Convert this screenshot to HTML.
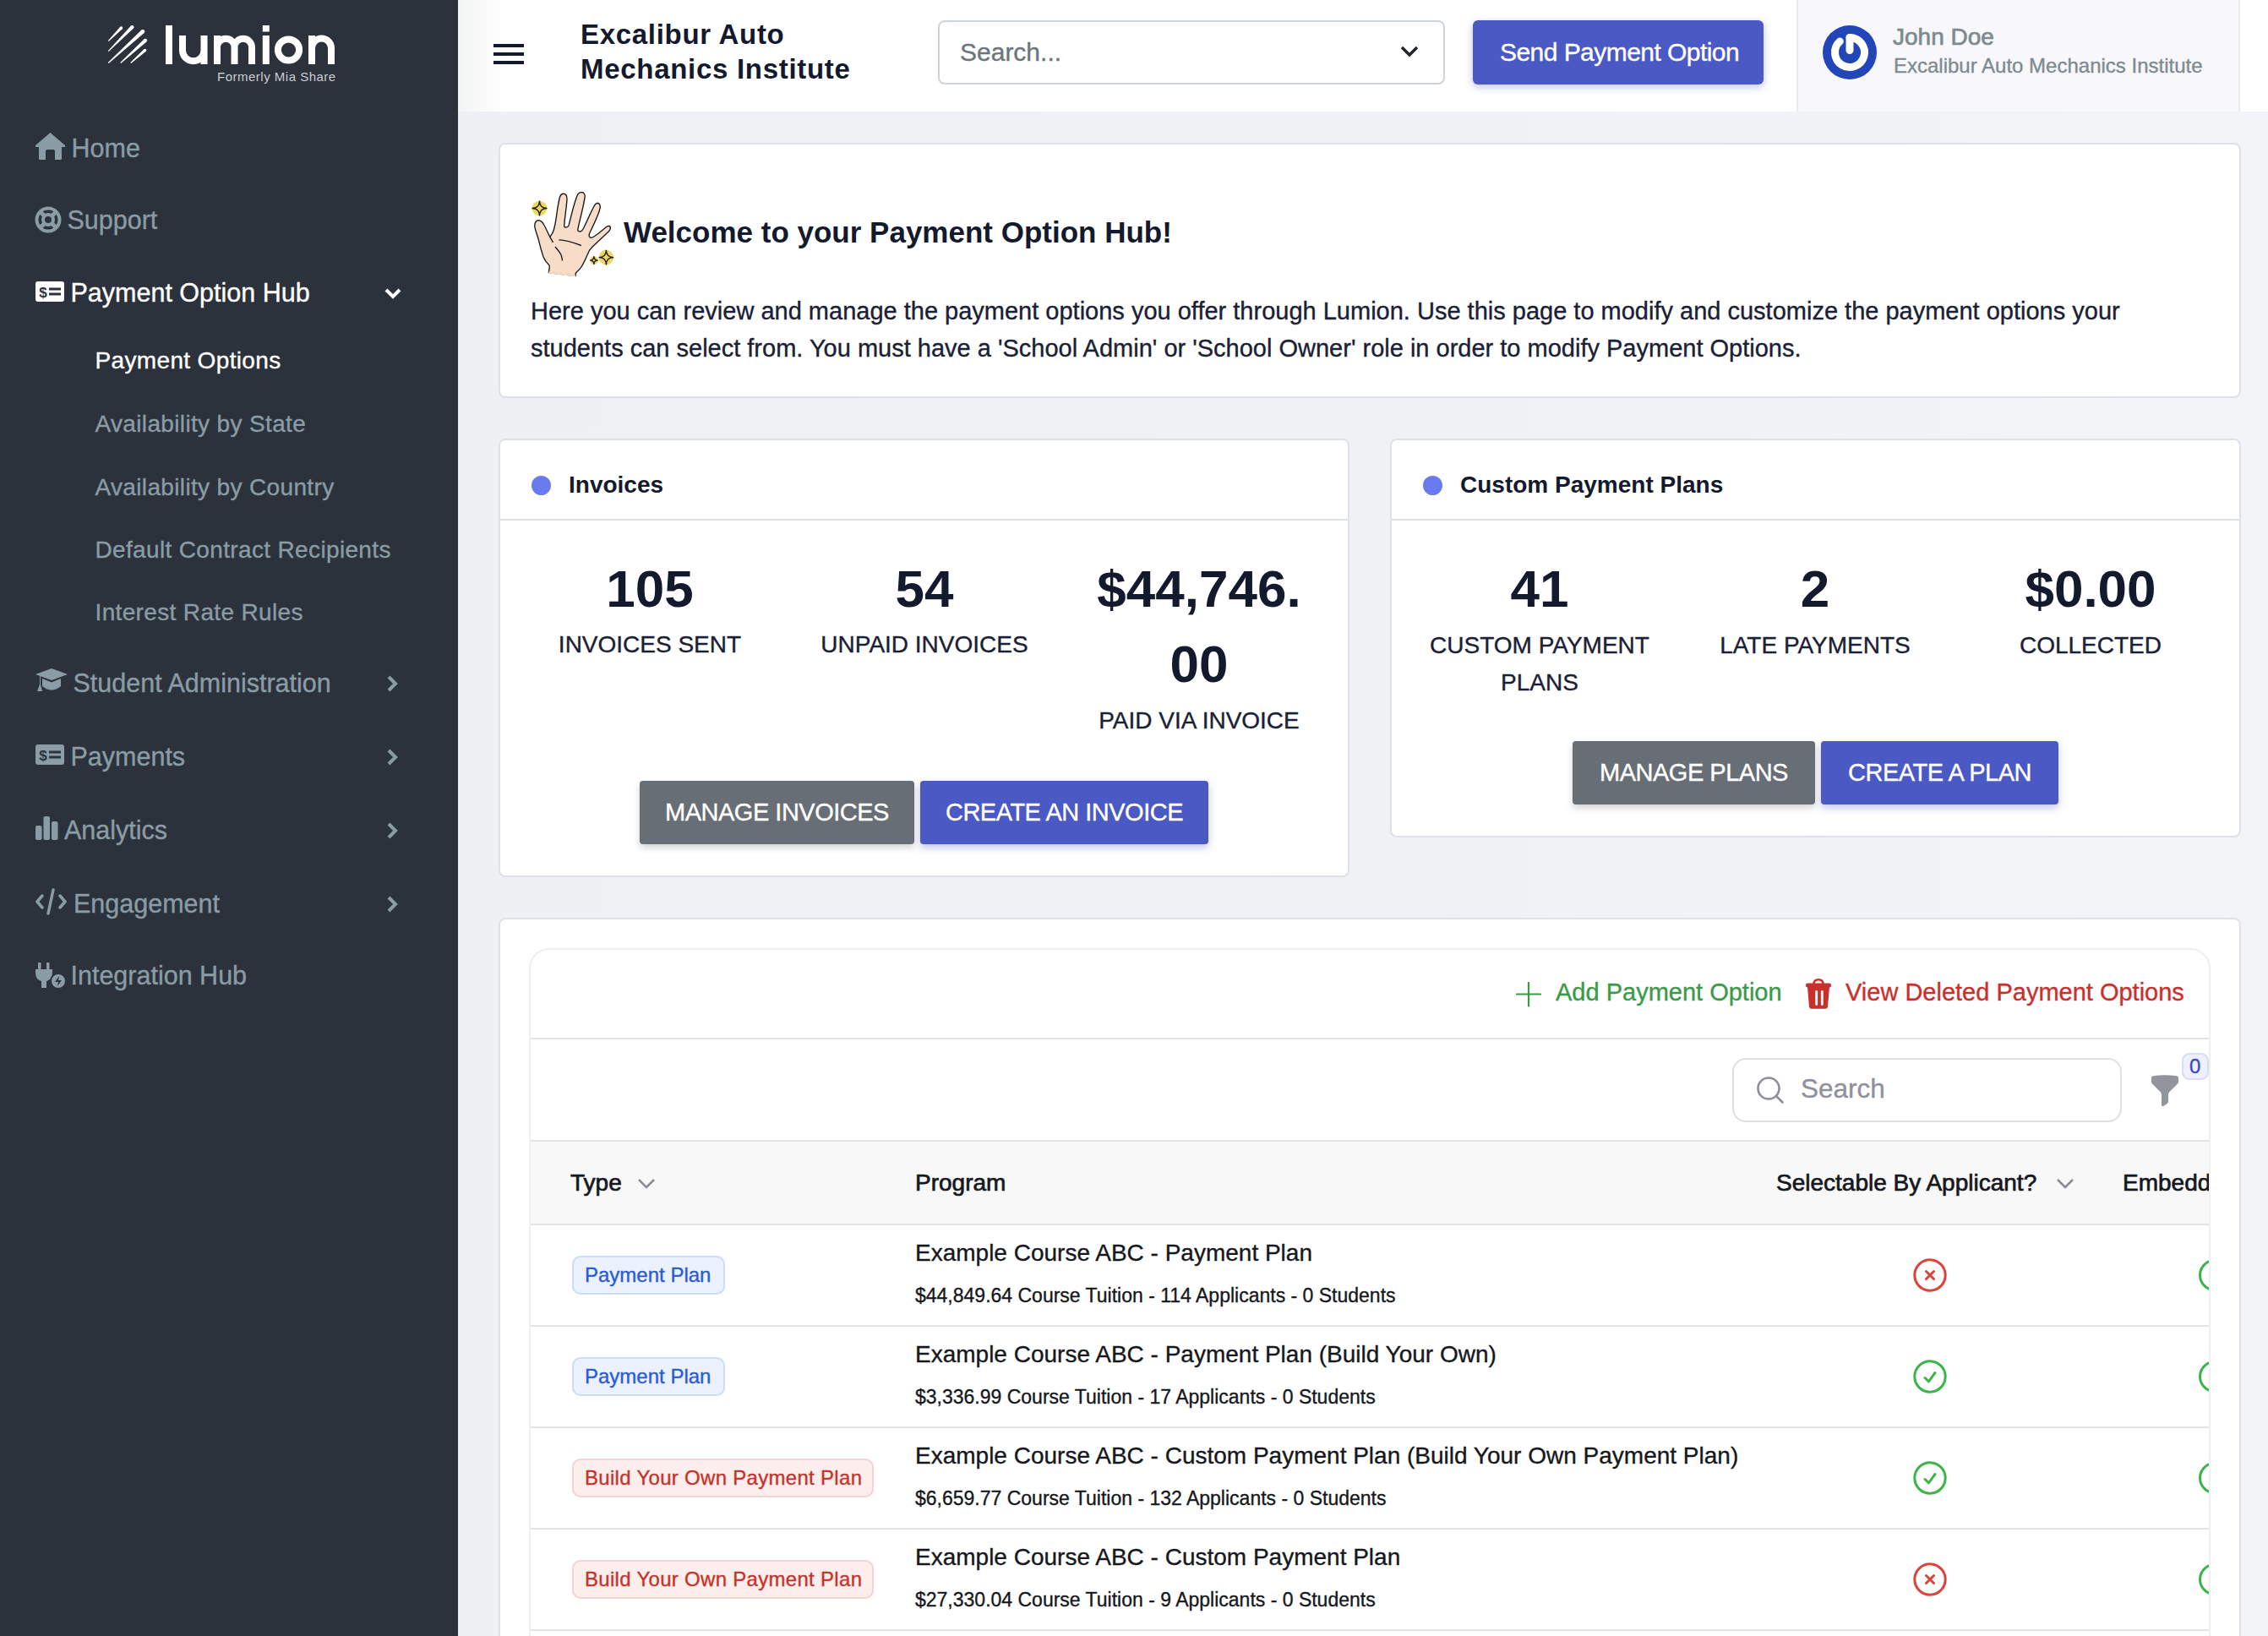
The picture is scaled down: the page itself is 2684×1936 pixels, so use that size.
<!DOCTYPE html>
<html><head><meta charset="utf-8"><style>
html,body{margin:0;padding:0;}
body{width:2684px;height:1936px;position:relative;overflow:hidden;font-family:"Liberation Sans", sans-serif;background:#eff0f4;}
.t{position:absolute;line-height:1;white-space:nowrap;}
.r{position:absolute;}
</style></head><body>
<div class="r" style="left:0px;top:0px;width:2684px;height:1936px;background:linear-gradient(90deg,#f1f2f5 0%,#eff0f4 20%,#f0f1f5 60%,#f3f4f8 100%);"></div><div class="r" style="left:542px;top:0px;width:2142px;height:132px;background:#ffffff;"></div><div class="r" style="left:542px;top:0px;width:58px;height:132px;background:linear-gradient(90deg,#f3f4f5,#ffffff);"></div><div class="r" style="left:2126px;top:0px;width:525px;height:132px;background:#f7f7fc;border-left:2px solid #e9e9ef;border-right:2px solid #e9e9ef;box-sizing:border-box;"></div><div class="r" style="left:0px;top:0px;width:542px;height:1936px;background:#2c323c;"></div><svg class="r" style="left:0;top:0" width="542" height="110" viewBox="0 0 542 110"><g fill="#ffffff"><polygon points="128.6,49.1 144.8,34.3 142.2,31.7 127.8,48.3"/><circle cx="143.5" cy="33" r="1.8"/><polygon points="128.6,61.1 158.0,33.5 155.0,30.5 127.8,60.3"/><circle cx="156.5" cy="32" r="2.1"/><polygon points="128.6,74.9 170.6,38.9 167.4,35.5 127.8,74.1"/><circle cx="169" cy="37.2" r="2.3"/><polygon points="143.1,74.9 173.4,49.4 170.6,46.2 142.3,74.1"/><circle cx="172" cy="47.8" r="2.1"/><polygon points="155.1,74.9 172.7,60.8 170.3,58.2 154.3,74.1"/><circle cx="171.5" cy="59.5" r="1.8"/></g><g fill="none" stroke="#ffffff" stroke-width="8"><path d="M200 30 V76"/><path d="M216 42 V59.5 A12.75 12.75 0 0 0 241.5 59.5 V42 M241.5 42 V76"/><path d="M257 42 V76 M257 56 A10.25 10.25 0 0 1 277.5 56 V76 M277.5 56 A10.25 10.25 0 0 1 298 56 V76"/><path d="M314.8 42 V76"/><circle cx="341.5" cy="59" r="12.6"/><path d="M369 42 V76 M369 57 A11.5 11.5 0 0 1 392 57 V76"/></g><rect x="310.8" y="30" width="8" height="7.5" fill="#fff"/></svg><div class="t" style="left:257px;top:83.3px;font-size:15px;color:#c9cdd2;font-weight:400;-webkit-text-stroke:0.001px #c9cdd2;letter-spacing:0.5px;">Formerly Mia Share</div><svg class="r" style="left:42px;top:157px" width="35" height="32" viewBox="0 0 35 32" fill="#8a9ca5"><path d="M17.5 0 L35 15 L35 17 L31 17 L31 31 Q31 32 30 32 L23 32 L23 22 Q23 20 21 20 L14 20 Q12 20 12 22 L12 32 L5 32 Q4 32 4 31 L4 17 L0 17 L0 15 Z"/></svg><div class="t" style="left:84.5px;top:160.2px;font-size:30.5px;color:#8a9ca5;font-weight:400;-webkit-text-stroke:0.35px #8a9ca5;">Home</div><svg class="r" style="left:41px;top:244px" width="32" height="32" viewBox="0 0 32 32" fill="#8a9ca5"><circle cx="16" cy="16" r="13.5" fill="none" stroke="#8a9ca5" stroke-width="4"/><circle cx="16" cy="16" r="6" fill="none" stroke="#8a9ca5" stroke-width="4"/><path d="M6 6 L12 12 M26 6 L20 12 M6 26 L12 20 M26 26 L20 20" stroke="#8a9ca5" stroke-width="5"/></svg><div class="t" style="left:79.5px;top:245.2px;font-size:30.5px;color:#8a9ca5;font-weight:400;-webkit-text-stroke:0.35px #8a9ca5;">Support</div><svg class="r" style="left:42px;top:333px" width="34" height="24" viewBox="0 0 34 24" fill="#ffffff"><rect x="0" y="0" width="34" height="24" rx="3"/><text x="9" y="19" font-family="Liberation Sans" font-weight="bold" font-size="17" fill="#2c323c" text-anchor="middle">$</text><rect x="16" y="7.5" width="14" height="3" fill="#2c323c"/><rect x="16" y="13.5" width="14" height="3" fill="#2c323c"/></svg><div class="t" style="left:83.5px;top:331.2px;font-size:30.5px;color:#ffffff;font-weight:400;-webkit-text-stroke:0.35px #ffffff;">Payment Option Hub</div><svg class="r" style="left:454px;top:339px" width="22" height="18" viewBox="0 0 22 18"><path d="M3 4 L11 12 L19 4" fill="none" stroke="#fff" stroke-width="4"/></svg><div class="t" style="left:112.5px;top:413.3px;font-size:28px;color:#ffffff;font-weight:400;-webkit-text-stroke:0.35px #ffffff;letter-spacing:0.35px;">Payment Options</div><div class="t" style="left:112.5px;top:488.3px;font-size:28px;color:#8a9ca5;font-weight:400;-webkit-text-stroke:0.35px #8a9ca5;letter-spacing:0.35px;">Availability by State</div><div class="t" style="left:112.5px;top:563.3px;font-size:28px;color:#8a9ca5;font-weight:400;-webkit-text-stroke:0.35px #8a9ca5;letter-spacing:0.35px;">Availability by Country</div><div class="t" style="left:112.5px;top:637.3px;font-size:28px;color:#8a9ca5;font-weight:400;-webkit-text-stroke:0.35px #8a9ca5;letter-spacing:0.35px;">Default Contract Recipients</div><div class="t" style="left:112.5px;top:711.3px;font-size:28px;color:#8a9ca5;font-weight:400;-webkit-text-stroke:0.35px #8a9ca5;letter-spacing:0.35px;">Interest Rate Rules</div><svg class="r" style="left:42px;top:791px" width="38" height="28" viewBox="0 0 38 28" fill="#8a9ca5"><path d="M19 0 L38 7 L19 14 L0 7 Z"/><path d="M8 12 L8 21 Q19 30 30 21 L30 12 L19 16.5 Z"/><path d="M5 9 L5 19 L2 27 L8 27 L6 19 L6 9 Z"/></svg><div class="t" style="left:86.5px;top:793.2px;font-size:30.5px;color:#8a9ca5;font-weight:400;-webkit-text-stroke:0.35px #8a9ca5;">Student Administration</div><svg class="r" style="left:456px;top:798px" width="18" height="22" viewBox="0 0 18 22"><path d="M4 3 L12 11 L4 19" fill="none" stroke="#8a9ca5" stroke-width="4"/></svg><svg class="r" style="left:42px;top:881px" width="34" height="24" viewBox="0 0 34 24" fill="#8a9ca5"><rect x="0" y="0" width="34" height="24" rx="3"/><text x="9" y="19" font-family="Liberation Sans" font-weight="bold" font-size="17" fill="#2c323c" text-anchor="middle">$</text><rect x="16" y="7.5" width="14" height="3" fill="#2c323c"/><rect x="16" y="13.5" width="14" height="3" fill="#2c323c"/></svg><div class="t" style="left:83.5px;top:879.7px;font-size:30.5px;color:#8a9ca5;font-weight:400;-webkit-text-stroke:0.35px #8a9ca5;">Payments</div><svg class="r" style="left:456px;top:885px" width="18" height="22" viewBox="0 0 18 22"><path d="M4 3 L12 11 L4 19" fill="none" stroke="#8a9ca5" stroke-width="4"/></svg><svg class="r" style="left:42px;top:966px" width="27" height="28" viewBox="0 0 27 28" fill="#8a9ca5"><rect x="0" y="11" width="7.5" height="17" rx="2"/><rect x="9.5" y="0" width="7.5" height="28" rx="2"/><rect x="19" y="6" width="7.5" height="22" rx="2"/></svg><div class="t" style="left:76.0px;top:967.2px;font-size:30.5px;color:#8a9ca5;font-weight:400;-webkit-text-stroke:0.35px #8a9ca5;">Analytics</div><svg class="r" style="left:456px;top:972px" width="18" height="22" viewBox="0 0 18 22"><path d="M4 3 L12 11 L4 19" fill="none" stroke="#8a9ca5" stroke-width="4"/></svg><svg class="r" style="left:41px;top:1051px" width="39" height="32" viewBox="0 0 39 32" fill="#8a9ca5"><path d="M9 9 L3 16 L9 23 M30 9 L36 16 L30 23 M22 2 L16 30" fill="none" stroke="#8a9ca5" stroke-width="3.5" stroke-linecap="round" stroke-linejoin="round"/></svg><div class="t" style="left:87.0px;top:1054.2px;font-size:30.5px;color:#8a9ca5;font-weight:400;-webkit-text-stroke:0.35px #8a9ca5;">Engagement</div><svg class="r" style="left:456px;top:1059px" width="18" height="22" viewBox="0 0 18 22"><path d="M4 3 L12 11 L4 19" fill="none" stroke="#8a9ca5" stroke-width="4"/></svg><svg class="r" style="left:42px;top:1139px" width="35" height="30" viewBox="0 0 35 30" fill="#8a9ca5"><rect x="3" y="0" width="3.5" height="8" rx="1"/><rect x="13" y="0" width="3.5" height="8" rx="1"/><path d="M0 8 L20 8 L20 12 Q20 20 13 22 L13 30 L7 30 L7 22 Q0 20 0 12 Z"/><circle cx="27" cy="22" r="9" stroke="#2c323c" stroke-width="2"/><path d="M28 16 L23 23 L27 23 L26 28 L31 21 L27 21 Z" fill="#2c323c"/></svg><div class="t" style="left:83.5px;top:1139.2px;font-size:30.5px;color:#8a9ca5;font-weight:400;-webkit-text-stroke:0.35px #8a9ca5;">Integration Hub</div><div class="r" style="left:584px;top:52px;width:36px;height:4px;background:#141a2e;"></div><div class="r" style="left:584px;top:62px;width:36px;height:4px;background:#141a2e;"></div><div class="r" style="left:584px;top:72px;width:36px;height:4px;background:#141a2e;"></div><div class="t" style="left:687px;top:24.4px;font-size:33px;color:#141a2e;font-weight:700;letter-spacing:0.7px;">Excalibur Auto</div><div class="t" style="left:687px;top:64.8px;font-size:33px;color:#141a2e;font-weight:700;letter-spacing:0.7px;">Mechanics Institute</div><div class="r" style="left:1110px;top:24px;width:600px;height:76px;background:#fff;border:2px solid #ced4da;border-radius:8px;box-sizing:border-box;"></div><div class="t" style="left:1136px;top:46.6px;font-size:30px;color:#6c757d;font-weight:400;-webkit-text-stroke:0.35px #6c757d;">Search...</div><svg class="r" style="left:1655px;top:52px" width="26" height="20" viewBox="0 0 26 20"><path d="M4 4 L13 13 L22 4" fill="none" stroke="#212529" stroke-width="3.5"/></svg><div class="r" style="left:1743px;top:24px;width:344px;height:76px;background:#4a59c4;border-radius:6px;box-shadow:0 3px 10px rgba(74,89,196,0.35);"></div><div class="t" style="left:1775px;top:47.1px;font-size:30px;color:#ffffff;font-weight:400;-webkit-text-stroke:0.35px #ffffff;letter-spacing:-0.55px;">Send Payment Option</div><svg class="r" style="left:2157px;top:30px" width="64" height="64" viewBox="0 0 64 64"><circle cx="32" cy="32" r="32" fill="#2146b8"/><g fill="none" stroke="#fff" stroke-width="9"><path d="M32 14.5 A17.5 17.5 0 1 1 20.29 19.0" stroke-linecap="round"/><path d="M32 14.5 V29.5" stroke-linecap="round"/></g></svg><div class="t" style="left:2240px;top:30.3px;font-size:28px;color:#7f8a90;font-weight:400;-webkit-text-stroke:0.7px #7f8a90;">John Doe</div><div class="t" style="left:2241px;top:65.7px;font-size:24px;color:#7f8a90;font-weight:400;-webkit-text-stroke:0.35px #7f8a90;">Excalibur Auto Mechanics Institute</div><div class="r" style="left:590px;top:169px;width:2062px;height:302px;background:#fff;border:2px solid #dee1e5;border-radius:8px;box-sizing:border-box;"></div><svg class="r" style="left:620px;top:215px" width="140" height="120" viewBox="0 0 140 120">
<circle cx="18.5" cy="31.5" r="8.8" fill="#ecd760"/>
<circle cx="97.4" cy="89.6" r="8.8" fill="#ecd760"/>
<circle cx="82.9" cy="93.1" r="4.8" fill="#ecd760"/>
<path d="M29.3 107.6 C30 104 30.5 100 30 99 C27 96 24.5 93 23 89 C21 83 19 76 17.6 69.7 C16 63 13 57 12.8 52.5 C12.5 48 15 45.8 17 45.8 C20 45.8 22.5 48.5 24 51.5 C26.5 56 28.5 61 30.8 65.3 C32.5 63 34 61.5 35 58 C37 52 38 45 39 37 C40 30 41 24 42.5 18.3 C43.5 15 45 14.3 46.9 14.3 C49.5 14.3 51 17 51 20.5 C50.5 30 48 45 47.7 52 C47.5 53.8 48.5 54 50 54 C52 54 52.5 53 53 52 C55 45 58 30 62.3 18.5 C63.5 14 66 12.5 68.2 12.5 C71 12.5 72.3 15 72.2 17.6 C71 28 66 45 63.8 56.5 C63.5 58.5 65 59 66.5 59 C68 59 69 58 70 56 C74 49 78 38 83.6 28 C85 26 86 25.3 87.3 25.3 C89.5 25.5 90.5 28 90.2 30.8 C89 38 82 52 77.7 61 C76.5 64 77.5 66.4 79.5 66.4 C81 66.4 83 65 85 63.5 C90 60 95 55.5 98.3 53 C100 52 102.3 52.3 102.3 54.3 C102.5 56 101.5 57.5 100.5 58.7 C96 63 88 70.5 80.7 77.5 C78 80 76.5 83 75.5 85.8 C73 91 71 96 68.2 100.5 C66 104 63 106.5 61.6 107.8 C61 109 61.2 111.5 61.2 111.5 L29.3 107.6 Z" fill="#f7dcc8" stroke="#1c1c1c" stroke-width="1.4" stroke-linejoin="round"/>
<path d="M29.3 107.6 L61.2 111.5" stroke="#f7dcc8" stroke-width="2"/>
<path d="M41.4 68.9 C50 69 60 72.5 67.8 75.5" fill="none" stroke="#1c1c1c" stroke-width="1.4"/>
<path d="M37 77 C41 82 45.5 86 45.5 93.5" fill="none" stroke="#1c1c1c" stroke-width="1.4"/>
<path d="M30.8 65.3 L34.5 71.9" fill="none" stroke="#1c1c1c" stroke-width="1.4"/>
<g fill="none" stroke="#1c1c1c" stroke-width="1.3">
<path d="M18.5 22.5 Q18.5 31.5 9.5 31.5 Q18.5 31.5 18.5 40.5 Q18.5 31.5 27.5 31.5 Q18.5 31.5 18.5 22.5 Z"/>
<path d="M97.4 80.8 Q97.4 89.6 88.6 89.6 Q97.4 89.6 97.4 98.4 Q97.4 89.6 106.2 89.6 Q97.4 89.6 97.4 80.8 Z"/>
<path d="M82.9 88.3 Q82.9 93.1 78.1 93.1 Q82.9 93.1 82.9 97.9 Q82.9 93.1 87.7 93.1 Q82.9 93.1 82.9 88.3 Z"/>
</g>
</svg><div class="t" style="left:738px;top:257.4px;font-size:35px;color:#141a2e;font-weight:700;">Welcome to your Payment Option Hub!</div><div class="t" style="left:628px;top:353.5px;font-size:29px;color:#1a2035;font-weight:400;-webkit-text-stroke:0.35px #1a2035;">Here you can review and manage the payment options you offer through Lumion. Use this page to modify and customize the payment options your</div><div class="t" style="left:628px;top:397.5px;font-size:29px;color:#1a2035;font-weight:400;-webkit-text-stroke:0.35px #1a2035;">students can select from. You must have a 'School Admin' or 'School Owner' role in order to modify Payment Options.</div><div class="r" style="left:590px;top:519px;width:1007px;height:519px;background:#fff;border:2px solid #dee1e5;border-radius:8px;box-sizing:border-box;"></div><div class="r" style="left:592px;top:614px;width:1003px;height:2px;background:#dee1e5;"></div><div class="r" style="left:628.5px;top:562.5px;width:23px;height:23px;border-radius:50%;background:#6a7bee;"></div><div class="t" style="left:673px;top:559.8px;font-size:28px;color:#141a2e;font-weight:700;">Invoices</div><div class="t" style="left:609.0px;top:665.5px;font-size:62px;color:#141a2e;font-weight:700;width:320px;text-align:center;">105</div><div class="t" style="left:609.0px;top:749.3px;font-size:28px;color:#1a2035;font-weight:400;-webkit-text-stroke:0.35px #1a2035;width:320px;text-align:center;">INVOICES SENT</div><div class="t" style="left:934.0px;top:665.5px;font-size:62px;color:#141a2e;font-weight:700;width:320px;text-align:center;">54</div><div class="t" style="left:934.0px;top:749.3px;font-size:28px;color:#1a2035;font-weight:400;-webkit-text-stroke:0.35px #1a2035;width:320px;text-align:center;">UNPAID INVOICES</div><div class="t" style="left:1259.0px;top:665.5px;font-size:62px;color:#141a2e;font-weight:700;width:320px;text-align:center;">$44,746.</div><div class="t" style="left:1259.0px;top:754.5px;font-size:62px;color:#141a2e;font-weight:700;width:320px;text-align:center;">00</div><div class="t" style="left:1259.0px;top:839.3px;font-size:28px;color:#1a2035;font-weight:400;-webkit-text-stroke:0.35px #1a2035;width:320px;text-align:center;">PAID VIA INVOICE</div><div class="r" style="left:757px;top:924px;width:325px;height:75px;background:#676e75;border-radius:4px;box-shadow:0 4px 8px rgba(0,0,0,0.18);"></div><div class="t" style="left:757.0px;top:946.5px;font-size:29px;color:#fff;font-weight:400;-webkit-text-stroke:0.35px #fff;letter-spacing:-0.5px;width:325px;text-align:center;">MANAGE INVOICES</div><div class="r" style="left:1089px;top:924px;width:341px;height:75px;background:#4a59c4;border-radius:4px;box-shadow:0 4px 10px rgba(74,89,196,0.35);"></div><div class="t" style="left:1089.0px;top:946.5px;font-size:29px;color:#fff;font-weight:400;-webkit-text-stroke:0.35px #fff;letter-spacing:-0.5px;width:341px;text-align:center;">CREATE AN INVOICE</div><div class="r" style="left:1645px;top:519px;width:1007px;height:472px;background:#fff;border:2px solid #dee1e5;border-radius:8px;box-sizing:border-box;"></div><div class="r" style="left:1647px;top:614px;width:1003px;height:2px;background:#dee1e5;"></div><div class="r" style="left:1683.5px;top:562.5px;width:23px;height:23px;border-radius:50%;background:#6a7bee;"></div><div class="t" style="left:1728px;top:559.8px;font-size:28px;color:#141a2e;font-weight:700;">Custom Payment Plans</div><div class="t" style="left:1662.0px;top:665.5px;font-size:62px;color:#141a2e;font-weight:700;width:320px;text-align:center;">41</div><div class="t" style="left:1662.0px;top:749.8px;font-size:28px;color:#1a2035;font-weight:400;-webkit-text-stroke:0.35px #1a2035;width:320px;text-align:center;">CUSTOM PAYMENT</div><div class="t" style="left:1662.0px;top:793.8px;font-size:28px;color:#1a2035;font-weight:400;-webkit-text-stroke:0.35px #1a2035;width:320px;text-align:center;">PLANS</div><div class="t" style="left:1988.0px;top:665.5px;font-size:62px;color:#141a2e;font-weight:700;width:320px;text-align:center;">2</div><div class="t" style="left:1988.0px;top:749.8px;font-size:28px;color:#1a2035;font-weight:400;-webkit-text-stroke:0.35px #1a2035;width:320px;text-align:center;">LATE PAYMENTS</div><div class="t" style="left:2314.0px;top:665.5px;font-size:62px;color:#141a2e;font-weight:700;width:320px;text-align:center;">$0.00</div><div class="t" style="left:2314.0px;top:749.8px;font-size:28px;color:#1a2035;font-weight:400;-webkit-text-stroke:0.35px #1a2035;width:320px;text-align:center;">COLLECTED</div><div class="r" style="left:1861px;top:877px;width:287px;height:75px;background:#676e75;border-radius:4px;box-shadow:0 4px 8px rgba(0,0,0,0.18);"></div><div class="t" style="left:1861.0px;top:899.5px;font-size:29px;color:#fff;font-weight:400;-webkit-text-stroke:0.35px #fff;letter-spacing:-0.5px;width:287px;text-align:center;">MANAGE PLANS</div><div class="r" style="left:2155px;top:877px;width:281px;height:75px;background:#4a59c4;border-radius:4px;box-shadow:0 4px 10px rgba(74,89,196,0.35);"></div><div class="t" style="left:2155.0px;top:899.5px;font-size:29px;color:#fff;font-weight:400;-webkit-text-stroke:0.35px #fff;letter-spacing:-0.5px;width:281px;text-align:center;">CREATE A PLAN</div><div class="r" style="left:590px;top:1086px;width:2062px;height:904px;background:#fff;border:2px solid #dee1e5;border-radius:8px;box-sizing:border-box;"></div><div class="r" style="left:626px;top:1122px;width:1990px;height:900px;border:2px solid #efefef;border-radius:24px;box-sizing:border-box;overflow:hidden;background:#fff;"><div class="r" style="left:-2px;top:104px;width:1990px;height:2px;background:#e3e3e3;"></div><div class="r" style="left:-2px;top:225px;width:1990px;height:2px;background:#e3e3e3;"></div><div class="r" style="left:-2px;top:227px;width:1990px;height:97px;background:#f8f8f9;"></div><div class="r" style="left:-2px;top:324px;width:1990px;height:2px;background:#e3e3e3;"></div><svg class="r" style="left:1166px;top:38px" width="30" height="30" viewBox="0 0 30 30"><path d="M15 1 V28.5 M1 14.5 H29" stroke="#3a9a48" stroke-width="2.2" stroke-linecap="round"/></svg><div class="t" style="left:1213px;top:36.0px;font-size:29px;color:#3a9a48;font-weight:400;-webkit-text-stroke:0.35px #3a9a48;">Add Payment Option</div><svg class="r" style="left:1509px;top:34px" width="30" height="36" viewBox="0 0 30 36"><path d="M9.5 6.5 Q9.5 1.3 15 1.3 Q20.5 1.3 20.5 6.5" fill="none" stroke="#c9302c" stroke-width="2.6"/><rect x="0" y="5.5" width="30" height="5" rx="2.2" fill="#c9302c"/><path d="M2 10 H28 L26 33 Q25.8 35.7 23 35.7 H7 Q4.2 35.7 4 33 Z" fill="#c9302c"/><rect x="11.3" y="14" width="2.8" height="18" rx="1.4" fill="#fff"/><rect x="17.9" y="14" width="2.8" height="18" rx="1.4" fill="#fff"/></svg><div class="t" style="left:1556px;top:36.0px;font-size:29px;color:#c9302c;font-weight:400;-webkit-text-stroke:0.35px #c9302c;">View Deleted Payment Options</div><div class="r" style="left:1422px;top:128px;width:461px;height:76px;border:2px solid #e0e0e3;border-radius:16px;box-sizing:border-box;background:#fff;"></div><svg class="r" style="left:1449px;top:149px" width="36" height="36" viewBox="0 0 36 36"><circle cx="16" cy="15" r="12.5" fill="none" stroke="#8d8f99" stroke-width="2.6"/><path d="M25 24 L32.5 31.5" stroke="#8d8f99" stroke-width="2.6" stroke-linecap="round"/></svg><div class="t" style="left:1503px;top:149.3px;font-size:31.5px;color:#8f919b;font-weight:400;-webkit-text-stroke:0.35px #8f919b;">Search</div><svg class="r" style="left:1917px;top:148px" width="34" height="37" viewBox="0 0 34 37"><path d="M1 3 Q1 0.3 17 0.3 Q33 0.3 33 3 V8 Q33 9.5 32 10.5 L22 20.5 Q21 21.8 21 23.5 V31 Q21 33 19.5 34.2 L15.5 36.8 Q13 38 13 35.5 V23.5 Q13 21.8 12 20.5 L2 10.5 Q1 9.5 1 8 Z" fill="#93959e"/></svg><div class="r" style="left:1954px;top:122px;width:32px;height:32px;background:#eef0fd;border:2px solid #d8dcf8;border-radius:9px;box-sizing:border-box;"></div><div class="t" style="left:1963px;top:125.7px;font-size:24px;color:#3a48c5;font-weight:400;-webkit-text-stroke:0.35px #3a48c5;">0</div><div class="t" style="left:47px;top:262.3px;font-size:28px;color:#16181d;font-weight:400;-webkit-text-stroke:0.7px #16181d;">Type</div><svg class="r" style="left:126px;top:269px" width="22" height="16" viewBox="0 0 22 16"><path d="M2 3 L11 12 L20 3" fill="none" stroke="#8a8c94" stroke-width="2.5"/></svg><div class="t" style="left:455px;top:262.3px;font-size:28px;color:#16181d;font-weight:400;-webkit-text-stroke:0.7px #16181d;">Program</div><div class="t" style="left:1474px;top:262.3px;font-size:28px;color:#16181d;font-weight:400;-webkit-text-stroke:0.7px #16181d;">Selectable By Applicant?</div><svg class="r" style="left:1805px;top:269px" width="22" height="16" viewBox="0 0 22 16"><path d="M2 3 L11 12 L20 3" fill="none" stroke="#8a8c94" stroke-width="2.5"/></svg><div class="t" style="left:1884px;top:262.3px;font-size:28px;color:#16181d;font-weight:400;-webkit-text-stroke:0.7px #16181d;">Embedded</div><div class="r" style="left:49px;top:362px;width:181px;height:46px;background:#ebf1fd;border:2px solid #cbdcf9;border-radius:10px;box-sizing:border-box;"></div><div class="t" style="left:64px;top:372.7px;font-size:24px;color:#2a5ad8;font-weight:400;-webkit-text-stroke:0.35px #2a5ad8;">Payment Plan</div><div class="t" style="left:455px;top:345.3px;font-size:28px;color:#16181d;font-weight:400;-webkit-text-stroke:0.35px #16181d;">Example Course ABC - Payment Plan</div><div class="t" style="left:455px;top:398.0px;font-size:23px;color:#16181d;font-weight:400;-webkit-text-stroke:0.35px #16181d;">$44,849.64 Course Tuition - 114 Applicants - 0 Students</div><svg class="r" style="left:1636px;top:365px" width="40" height="40" viewBox="0 0 40 40"><circle cx="20" cy="20" r="18.2" fill="none" stroke="#d9443b" stroke-width="3"/><path d="M15.5 15.5 L24.5 24.5 M24.5 15.5 L15.5 24.5" fill="none" stroke="#d9443b" stroke-width="3" stroke-linecap="round"/></svg><svg class="r" style="left:1974px;top:366px" width="38" height="38" viewBox="0 0 38 38"><circle cx="19" cy="19" r="17.5" fill="none" stroke="#3bb54a" stroke-width="3"/></svg><div class="r" style="left:-2px;top:444px;width:1990px;height:2px;background:#e4e4e4;"></div><div class="r" style="left:49px;top:482px;width:181px;height:46px;background:#ebf1fd;border:2px solid #cbdcf9;border-radius:10px;box-sizing:border-box;"></div><div class="t" style="left:64px;top:492.7px;font-size:24px;color:#2a5ad8;font-weight:400;-webkit-text-stroke:0.35px #2a5ad8;">Payment Plan</div><div class="t" style="left:455px;top:465.3px;font-size:28px;color:#16181d;font-weight:400;-webkit-text-stroke:0.35px #16181d;">Example Course ABC - Payment Plan (Build Your Own)</div><div class="t" style="left:455px;top:518.0px;font-size:23px;color:#16181d;font-weight:400;-webkit-text-stroke:0.35px #16181d;">$3,336.99 Course Tuition - 17 Applicants - 0 Students</div><svg class="r" style="left:1636px;top:485px" width="40" height="40" viewBox="0 0 40 40"><circle cx="20" cy="20" r="18.2" fill="none" stroke="#3bb54a" stroke-width="3"/><path d="M14 21.5 L18.5 25.8 L26 15.5" fill="none" stroke="#3bb54a" stroke-width="3" stroke-linecap="round" stroke-linejoin="round"/></svg><svg class="r" style="left:1974px;top:486px" width="38" height="38" viewBox="0 0 38 38"><circle cx="19" cy="19" r="17.5" fill="none" stroke="#3bb54a" stroke-width="3"/></svg><div class="r" style="left:-2px;top:564px;width:1990px;height:2px;background:#e4e4e4;"></div><div class="r" style="left:49px;top:602px;width:357px;height:46px;background:#fdeeee;border:2px solid #f6d1d1;border-radius:10px;box-sizing:border-box;"></div><div class="t" style="left:64px;top:612.7px;font-size:24px;color:#c5332a;font-weight:400;-webkit-text-stroke:0.35px #c5332a;letter-spacing:0.3px;">Build Your Own Payment Plan</div><div class="t" style="left:455px;top:585.3px;font-size:28px;color:#16181d;font-weight:400;-webkit-text-stroke:0.35px #16181d;">Example Course ABC - Custom Payment Plan (Build Your Own Payment Plan)</div><div class="t" style="left:455px;top:638.0px;font-size:23px;color:#16181d;font-weight:400;-webkit-text-stroke:0.35px #16181d;">$6,659.77 Course Tuition - 132 Applicants - 0 Students</div><svg class="r" style="left:1636px;top:605px" width="40" height="40" viewBox="0 0 40 40"><circle cx="20" cy="20" r="18.2" fill="none" stroke="#3bb54a" stroke-width="3"/><path d="M14 21.5 L18.5 25.8 L26 15.5" fill="none" stroke="#3bb54a" stroke-width="3" stroke-linecap="round" stroke-linejoin="round"/></svg><svg class="r" style="left:1974px;top:606px" width="38" height="38" viewBox="0 0 38 38"><circle cx="19" cy="19" r="17.5" fill="none" stroke="#3bb54a" stroke-width="3"/></svg><div class="r" style="left:-2px;top:684px;width:1990px;height:2px;background:#e4e4e4;"></div><div class="r" style="left:49px;top:722px;width:357px;height:46px;background:#fdeeee;border:2px solid #f6d1d1;border-radius:10px;box-sizing:border-box;"></div><div class="t" style="left:64px;top:732.7px;font-size:24px;color:#c5332a;font-weight:400;-webkit-text-stroke:0.35px #c5332a;letter-spacing:0.3px;">Build Your Own Payment Plan</div><div class="t" style="left:455px;top:705.3px;font-size:28px;color:#16181d;font-weight:400;-webkit-text-stroke:0.35px #16181d;">Example Course ABC - Custom Payment Plan</div><div class="t" style="left:455px;top:758.0px;font-size:23px;color:#16181d;font-weight:400;-webkit-text-stroke:0.35px #16181d;">$27,330.04 Course Tuition - 9 Applicants - 0 Students</div><svg class="r" style="left:1636px;top:725px" width="40" height="40" viewBox="0 0 40 40"><circle cx="20" cy="20" r="18.2" fill="none" stroke="#d9443b" stroke-width="3"/><path d="M15.5 15.5 L24.5 24.5 M24.5 15.5 L15.5 24.5" fill="none" stroke="#d9443b" stroke-width="3" stroke-linecap="round"/></svg><svg class="r" style="left:1974px;top:726px" width="38" height="38" viewBox="0 0 38 38"><circle cx="19" cy="19" r="17.5" fill="none" stroke="#3bb54a" stroke-width="3"/></svg><div class="r" style="left:-2px;top:804px;width:1990px;height:2px;background:#e4e4e4;"></div><div class="r" style="left:49px;top:842px;width:181px;height:46px;background:#ebf1fd;border:2px solid #cbdcf9;border-radius:10px;box-sizing:border-box;"></div><div class="t" style="left:64px;top:852.7px;font-size:24px;color:#2a5ad8;font-weight:400;-webkit-text-stroke:0.35px #2a5ad8;">Payment Plan</div><svg class="r" style="left:1636px;top:845px" width="40" height="40" viewBox="0 0 40 40"><circle cx="20" cy="20" r="18.2" fill="none" stroke="#3bb54a" stroke-width="3"/><path d="M14 21.5 L18.5 25.8 L26 15.5" fill="none" stroke="#3bb54a" stroke-width="3" stroke-linecap="round" stroke-linejoin="round"/></svg><svg class="r" style="left:1974px;top:846px" width="38" height="38" viewBox="0 0 38 38"><circle cx="19" cy="19" r="17.5" fill="none" stroke="#3bb54a" stroke-width="3"/></svg></div>
</body></html>
